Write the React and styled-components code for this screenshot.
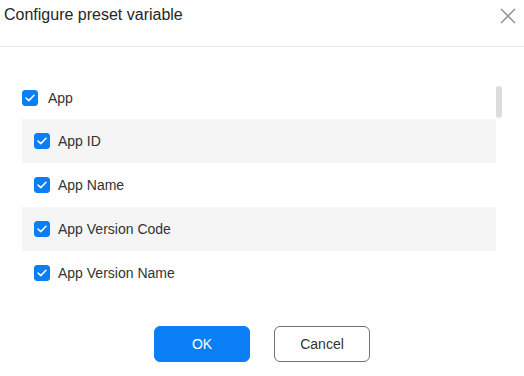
import React, { useState } from 'react'
import styled, { createGlobalStyle } from 'styled-components'

const items = ['App ID', 'App Name', 'App Version Code', 'App Version Name']

export default function App() {
    const [checked, setChecked] = useState(items.map(() => true))
    const toggle = i => setChecked(old => old.map((v, j) => (j === i ? !v : v)))
    const all = checked.every(Boolean)

    return (
        <>
            <GlobalStyle />
            <Dialog>
                <Header>
                    <Title>Configure preset variable</Title>
                    <Close aria-label="close">
                        <svg width="16" height="16" viewBox="0 0 16 16">
                            <path d="M1 1L15 15M15 1L1 15" stroke="#9a9a9a" strokeWidth="1.6" fill="none" />
                        </svg>
                    </Close>
                </Header>
                <Body>
                    <ScrollWrap>
                        <List>
                            <Row $parent onClick={() => setChecked(items.map(() => !all))}>
                                <Box $on={all}><Tick /></Box>
                                <Label>App</Label>
                            </Row>
                            {items.map((name, i) => (
                                <Row key={name} $striped={i % 2 === 0} onClick={() => toggle(i)}>
                                    <Box $on={checked[i]}><Tick /></Box>
                                    <Label>{name}</Label>
                                </Row>
                            ))}
                        </List>
                        <Thumb />
                    </ScrollWrap>
                </Body>
                <Footer>
                    <Button $primary>OK</Button>
                    <Button>Cancel</Button>
                </Footer>
            </Dialog>
        </>
    )
}

const Tick = () => (
    <svg width="10" height="8" viewBox="0 0 10 8">
        <path d="M1 4L3.8 6.6L9 1.3" stroke="#fff" strokeWidth="1.5" fill="none" strokeLinecap="round" strokeLinejoin="round" />
    </svg>
)

const GlobalStyle = createGlobalStyle`
    body {
        margin: 0;
        background: #fff;
        font-family: "Liberation Sans", Arial, sans-serif;
        color: #333;
    }
`
const Dialog = styled.div`
    width: 524px;
    height: 376px;
    display: flex;
    flex-direction: column;
    overflow: hidden;
`
const Header = styled.div`
    height: 47px;
    box-sizing: border-box;
    display: flex;
    align-items: flex-start;
    justify-content: space-between;
    padding: 5px 8px 0 4px;
    border-bottom: 1px solid #e8e8e8;
`
const Title = styled.div`
    font-size: 16px;
    line-height: 20px;
    color: #262626;
`
const Close = styled.button`
    border: 0;
    background: none;
    padding: 0;
    margin-top: 3px;
    width: 16px;
    height: 16px;
    cursor: pointer;
    display: flex;
`
const Body = styled.div`
    padding: 30px 22px 0 22px;
`
const ScrollWrap = styled.div`
    position: relative;
    height: 218px;
    overflow: hidden;
    padding-right: 6px;
`
const List = styled.div`
    display: flex;
    flex-direction: column;
`
const Row = styled.div`
    display: flex;
    align-items: center;
    gap: ${p => (p.$parent ? '10px' : '8px')};
    height: ${p => (p.$parent ? '42px' : '44px')};
    padding-left: ${p => (p.$parent ? '0' : '12px')};
    background: ${p => (p.$striped ? '#f5f5f5' : 'transparent')};
    cursor: pointer;
`
const Box = styled.span`
    width: 16px;
    height: 16px;
    border-radius: 3px;
    box-sizing: border-box;
    display: flex;
    align-items: center;
    justify-content: center;
    background: ${p => (p.$on ? '#0a7ff5' : '#fff')};
    border: 1px solid ${p => (p.$on ? '#0a7ff5' : '#c8c8c8')};
    flex-shrink: 0;
`
const Label = styled.span`
    font-size: 14px;
    color: #333;
`
const Thumb = styled.div`
    position: absolute;
    right: 0;
    top: 9px;
    width: 6px;
    height: 32px;
    border-radius: 3px;
    background: #dcdcdc;
`
const Footer = styled.div`
    display: flex;
    justify-content: center;
    gap: 24px;
    margin-top: 31px;
`
const Button = styled.button`
    width: 96px;
    height: 36px;
    border-radius: 6px;
    font-family: "Liberation Sans", Arial, sans-serif;
    font-size: 14px;
    cursor: pointer;
    background: ${p => (p.$primary ? '#0a7ff5' : '#fff')};
    color: ${p => (p.$primary ? '#fff' : '#333')};
    border: 1px solid ${p => (p.$primary ? '#0a7ff5' : '#707070')};
`
